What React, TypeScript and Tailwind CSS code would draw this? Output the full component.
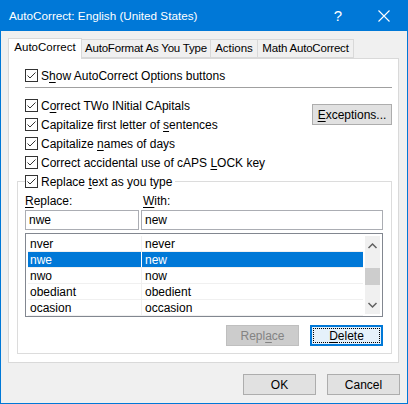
import React from 'react';

const font = { fontFamily: '"Liberation Sans", Arial, sans-serif' };

function Check() {
  return (
    <svg width="13" height="13" viewBox="0 0 13 13" className="shrink-0 bg-white">
      <rect x="0.5" y="0.5" width="12" height="12" fill="#fff" stroke="#333" />
      <path d="M2.5 6.5 L5 9 L10.5 3.5" fill="none" stroke="#333" strokeWidth="1" />
    </svg>
  );
}

function CheckRow({ children }: { children: React.ReactNode }) {
  return (
    <div className="flex items-center h-[19px] gap-[3px]">
      <Check />
      <span className="whitespace-nowrap">{children}</span>
    </div>
  );
}

const U = ({ children }: { children: React.ReactNode }) => (
  <span className="underline underline-offset-[2px]">{children}</span>
);

const rows = [
  ['nver', 'never'],
  ['nwe', 'new'],
  ['nwo', 'now'],
  ['obediant', 'obedient'],
  ['ocasion', 'occasion'],
];

export default function App() {
  return (
    <div
      style={font}
      className="w-[408px] h-[404px] flex flex-col bg-[#f0f0f0] border border-t-0 border-[#0078d7] text-[12px] text-black overflow-hidden"
    >
      {/* title bar */}
      <div className="h-[31px] -mx-px bg-[#0078d7] text-white flex items-center shrink-0">
        <span className="pl-[9px] text-[11.7px]">AutoCorrect: English (United States)</span>
        <span className="ml-auto mr-[36px] text-[15px] leading-none">?</span>
        <svg width="12" height="12" viewBox="0 0 12 12" className="mr-[18px]">
          <path d="M0.5 0.5 L11.5 11.5 M11.5 0.5 L0.5 11.5" stroke="#fff" strokeWidth="1.1" />
        </svg>
      </div>

      <div className="px-[7px] pt-[7px] flex flex-col">
        {/* tabs */}
        <div className="flex items-end h-[21px] relative z-10 whitespace-nowrap text-[11.5px]">
          <div className="h-[21px] w-[74px] bg-white border border-b-0 border-[#d9d9d9] flex items-center justify-center pb-[2px]">
            AutoCorrect
          </div>
          <div className="h-[19px] w-[130px] -ml-px bg-[#f0f0f0] border border-[#d9d9d9] flex items-center justify-center mb-px tracking-[-0.2px]">
            AutoFormat As You Type
          </div>
          <div className="h-[19px] w-[48px] -ml-px bg-[#f0f0f0] border border-[#d9d9d9] flex items-center justify-center mb-px">
            Actions
          </div>
          <div className="h-[19px] w-[97px] -ml-px bg-[#f0f0f0] border border-[#d9d9d9] flex items-center justify-center mb-px tracking-[-0.2px]">
            Math AutoCorrect
          </div>
        </div>

        {/* panel */}
        <div className="-mt-px w-[391px] h-[305px] bg-white border border-[#d9d9d9] pl-[8px] pr-[6px] pt-[7px] flex flex-col">
          <div className="ml-[8px]">
            <CheckRow>
              S<U>h</U>ow AutoCorrect Options buttons
            </CheckRow>
          </div>
          <div className="ml-[8px] mt-[2px] h-px bg-[#a0a0a0]" />

          <div className="flex mt-[8px]">
            <div className="ml-[8px] flex flex-col">
              <CheckRow>
                C<U>o</U>rrect TWo INitial CApitals
              </CheckRow>
              <CheckRow>
                Capitalize first letter of <U>s</U>entences
              </CheckRow>
              <CheckRow>
                Capitalize <U>n</U>ames of days
              </CheckRow>
              <CheckRow>
                Correct accidental use of cAPS <U>L</U>OCK key
              </CheckRow>
            </div>
            <button className="ml-auto mt-[8px] w-[80px] h-[21px] bg-[#e1e1e1] border border-[#adadad]">
              <U>E</U>xceptions...
            </button>
          </div>

          <fieldset className="border border-[#dcdcdc] pl-[7px] pr-[8px] pb-[6px] h-[182px]">
            <legend className="pr-[3px]">
              <CheckRow>
                Replace <U>t</U>ext as you type
              </CheckRow>
            </legend>

            <div className="flex mt-[2px] h-[16px] items-center">
              <span className="w-[118px]">
                <U>R</U>eplace:
              </span>
              <span>
                <U>W</U>ith:
              </span>
            </div>
            <div className="flex gap-[2px] mt-px">
              <div className="w-[114px] h-[20px] border border-[#abadb3] flex items-center px-[3px]">nwe</div>
              <div className="flex-1 h-[20px] border border-[#abadb3] flex items-center px-[3px]">new</div>
            </div>

            <div className="mt-[3px] h-[84px] border border-[#828790] p-[2px] flex">
              <div className="flex-1 flex flex-col">
                {rows.map(([a, b], i) => {
                  const sel = i === 1;
                  return (
                    <div
                      key={a}
                      className={`flex h-[16px] border-b border-[#f0f0f0] ${sel ? 'bg-[#0078d7] text-white' : ''}`}
                    >
                      <div
                        className={`w-[114px] px-[2px] flex items-center border-r ${sel ? 'border-white' : 'border-[#f0f0f0]'}`}
                      >
                        {a}
                      </div>
                      <div className="flex-1 px-[3px] flex items-center">{b}</div>
                    </div>
                  );
                })}
              </div>
              <div className="w-[15px] ml-[2px] bg-[#f0f0f0] flex flex-col items-center">
                <svg width="15" height="17" viewBox="0 0 15 17" className="mt-[2px]">
                  <path d="M3.5 10 L7.5 6 L11.5 10" fill="none" stroke="#606060" strokeWidth="1.5" />
                </svg>
                <div className="mt-[13px] w-[15px] h-[17px] bg-[#cdcdcd]" />
                <svg width="15" height="17" viewBox="0 0 15 17" className="mt-auto">
                  <path d="M3.5 6 L7.5 10 L11.5 6" fill="none" stroke="#606060" strokeWidth="1.5" />
                </svg>
              </div>
            </div>

            <div className="flex justify-end gap-[11px] mt-[8px]">
              <button className="w-[73px] h-[21px] bg-[#cccccc] border border-[#bfbfbf] text-[#838383]">
                Repl<U>a</U>ce
              </button>
              <button className="w-[73px] h-[21px] bg-[#e5f1fb] border-2 border-[#0078d7] p-px">
                <span className="w-full h-full flex items-center justify-center border border-dotted border-black">
                  <U>D</U>elete
                </span>
              </button>
            </div>
          </fieldset>
        </div>

        {/* bottom buttons */}
        <div className="flex justify-end gap-[11px] mt-[11px]">
          <button className="w-[73px] h-[21px] bg-[#e1e1e1] border border-[#adadad]">OK</button>
          <button className="w-[73px] h-[21px] bg-[#e1e1e1] border border-[#adadad]">Cancel</button>
        </div>
      </div>
    </div>
  );
}
